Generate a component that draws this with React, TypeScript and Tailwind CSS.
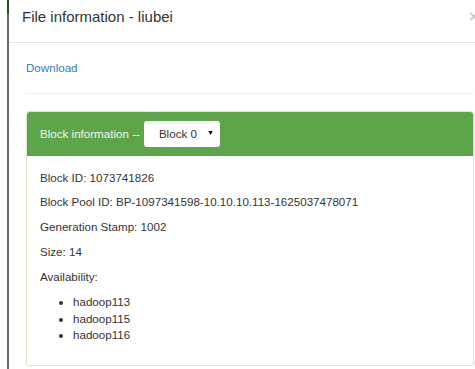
export default function App() {
  const replicas = ["hadoop113", "hadoop115", "hadoop116"];

  return (
    <div
      className="relative flex h-[369px] w-[475px] overflow-hidden bg-white text-[#333]"
      style={{ fontFamily: '"Liberation Sans", Arial, sans-serif' }}
    >
      {/* backdrop edge */}
      <div className="ml-[7px] flex w-[2px] shrink-0 flex-col bg-[#6b6b6b]">
        <div className="h-[14px] bg-[#2c4a28]" />
      </div>

      {/* Modal */}
      <div className="w-[480px] shrink-0">
        {/* Header */}
        <div className="flex h-[43px] items-start justify-between border-b border-[#e5e5e5] pl-[13px] pr-[10px] pt-[6px]">
          <h4 className="text-[15px] leading-[21px]">File information - liubei</h4>
          <span className="text-[17px] font-bold leading-[21px] text-black opacity-20">×</span>
        </div>

        {/* Body */}
        <div className="pl-[17px] pr-[15px] pt-[17px]">
          <a className="block text-[11.6px] leading-[16.6px] text-[#337ab7]">Download</a>
          <hr className="mt-[16px] border-t border-[#eee]" />

          {/* Block panel */}
          <div className="mt-[17px] rounded-[3px] border border-[#d6e9c6]">
            <div className="flex h-[44px] items-center rounded-t-[3px] bg-[#5da44b] px-[13px] text-[11.6px] text-white/90">
              <span>Block information --</span>
              <div className="ml-[4px] flex h-[26px] w-[76px] items-center justify-between rounded-[3px] bg-white pl-[15px] pr-[6px] text-[11.6px] text-[#333]">
                <span>Block 0</span>
                <span className="text-[7px] text-black">▼</span>
              </div>
            </div>
            <div className="px-[13px] pb-[12.5px] pt-[14px] text-[11.6px] leading-[16.6px]">
              <p className="mb-[8.3px]">Block ID: 1073741826</p>
              <p className="mb-[8.3px]">Block Pool ID: BP-1097341598-10.10.10.113-1625037478071</p>
              <p className="mb-[8.3px]">Generation Stamp: 1002</p>
              <p className="mb-[8.3px]">Size: 14</p>
              <p className="mb-[8.3px]">Availability:</p>
              <ul className="mb-[8.3px] list-disc pl-[33px]">
                {replicas.map((r) => (
                  <li key={r}>{r}</li>
                ))}
              </ul>
            </div>
          </div>
        </div>
      </div>
    </div>
  );
}
